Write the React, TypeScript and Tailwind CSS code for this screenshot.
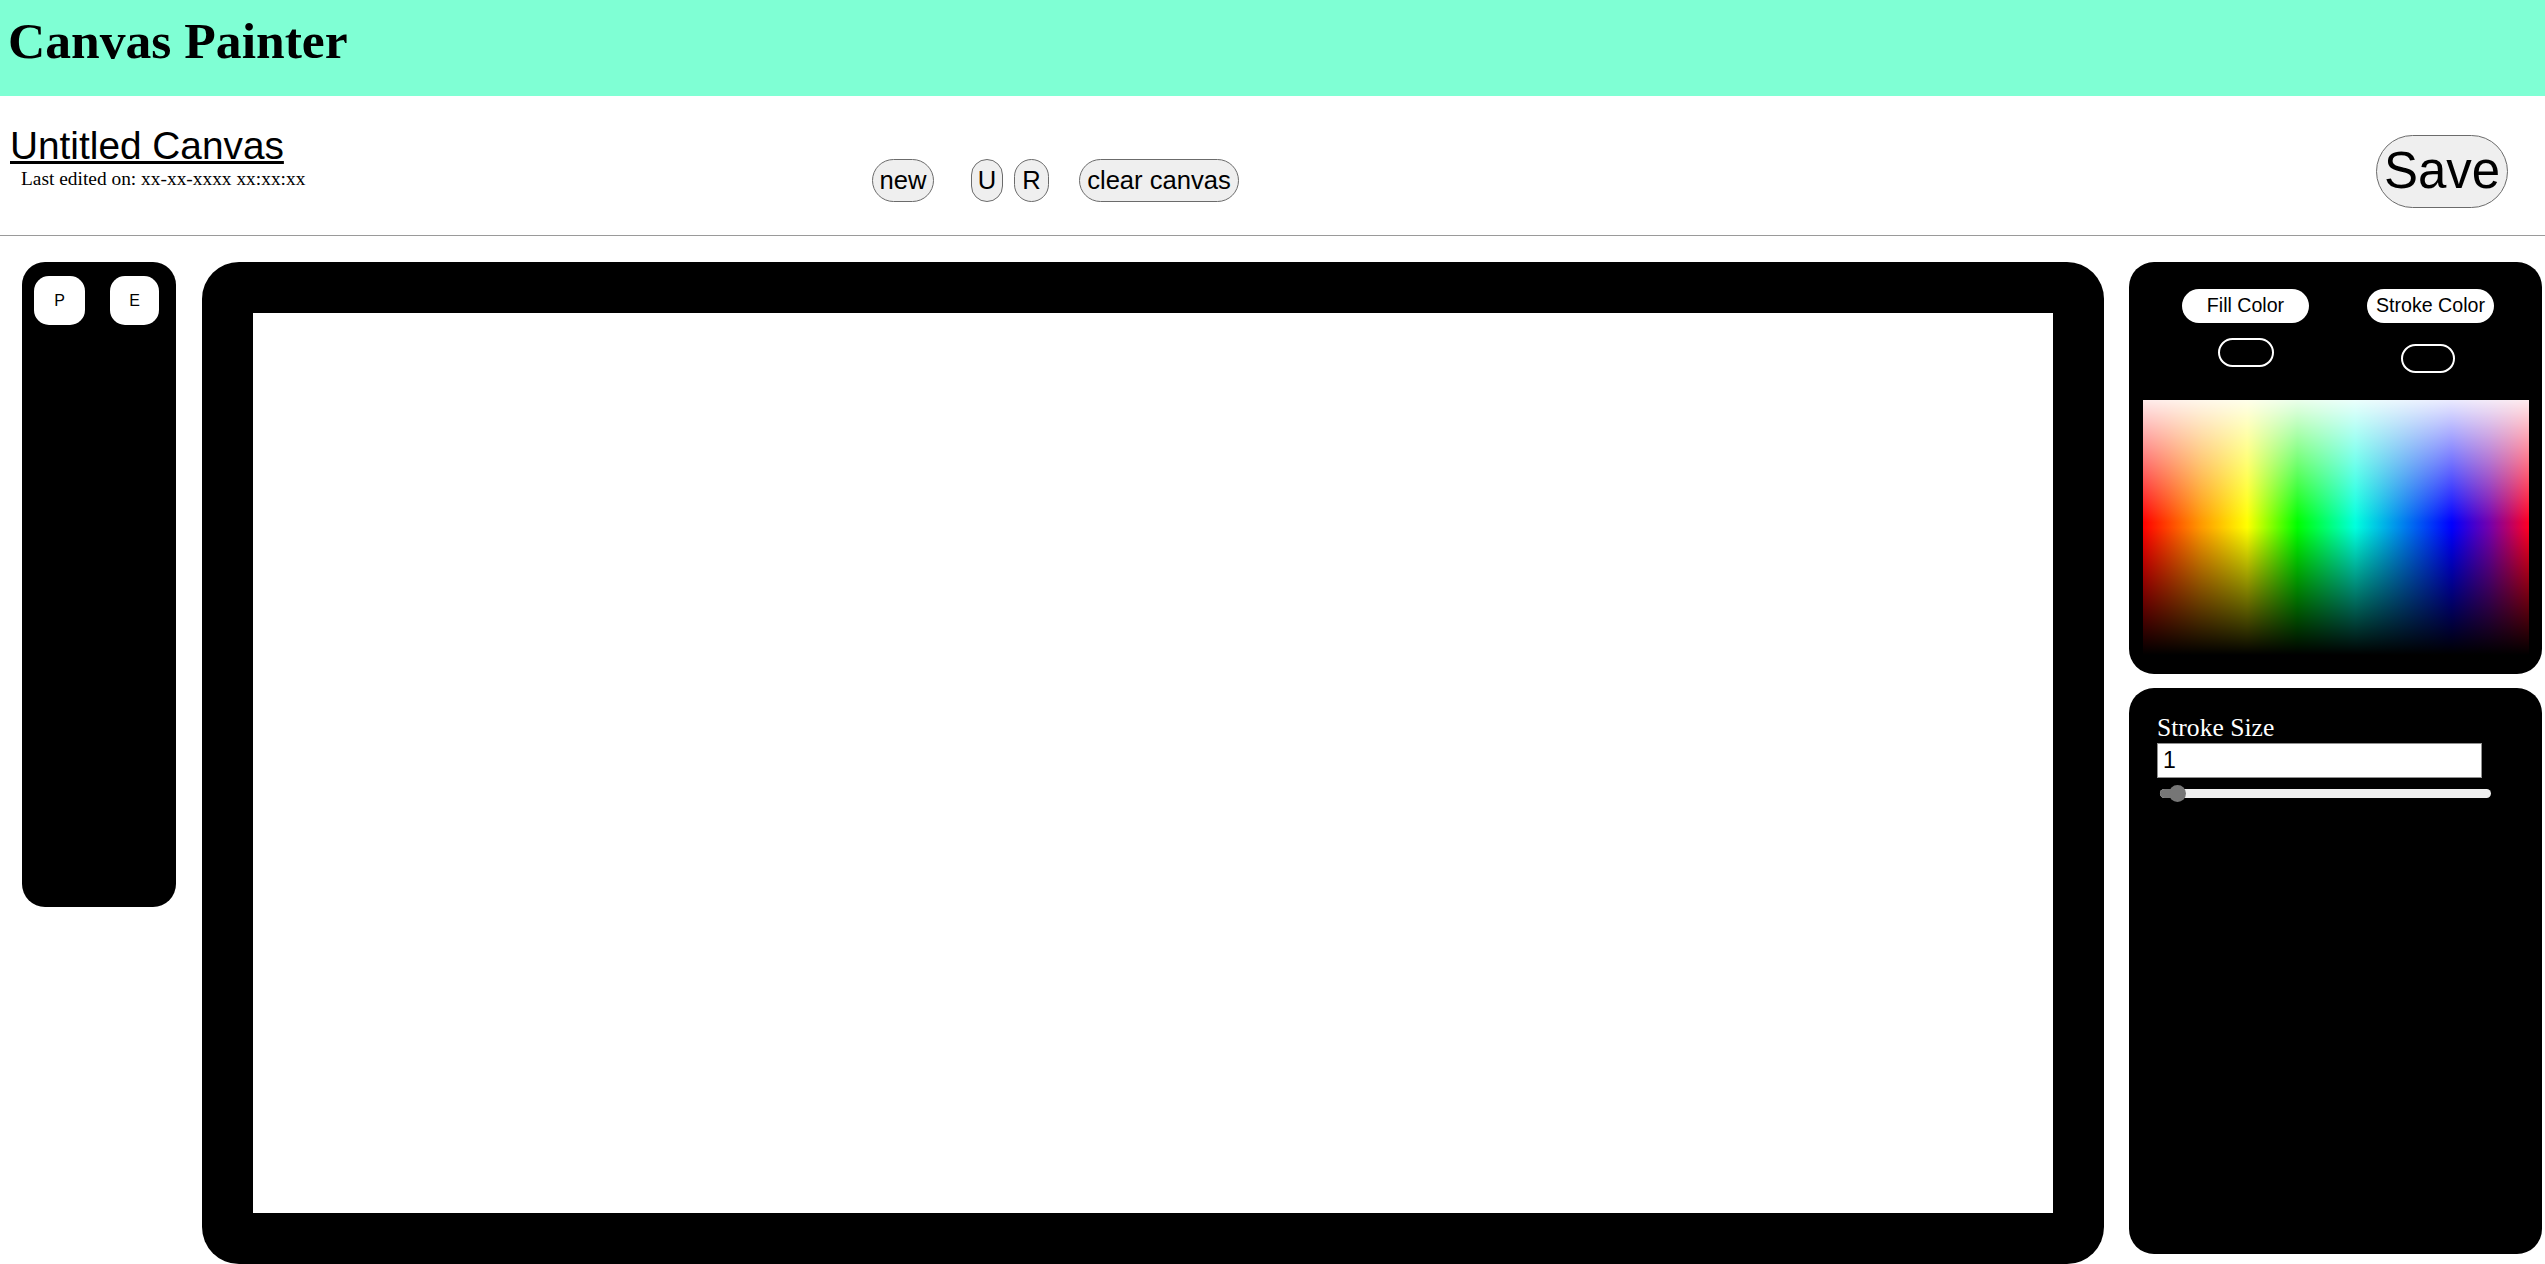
const SANS = "font-['Liberation_Sans',Arial,sans-serif]";
const SERIF = "font-['Liberation_Serif','Times_New_Roman',serif]";

const btn =
  "flex items-center justify-center rounded-full border border-[#6b6b6b] bg-[#efefef] text-black font-['Liberation_Sans',Arial,sans-serif]";

function Toolbar() {
  return (
    <div className="flex h-[139px] items-start">
      <div className="w-[340px] shrink-0 pl-[10px] pt-[28px]">
        <a href="#" className={`${SANS} block text-[38.8px] leading-[43px] text-black underline`}>
          Untitled Canvas
        </a>
        <p className={`${SERIF} mt-[1px] pl-[11px] text-[19.4px] leading-[22px] text-black`}>
          Last edited on: xx-xx-xxxx xx:xx:xx
        </p>
      </div>

      <div className="ml-[532px] mt-[63px] flex items-center">
        <button className={`${btn} h-[43px] w-[62px] text-[25.6px]`}>new</button>
        <button className={`${btn} ml-[37px] h-[43px] w-[32px] text-[25.6px]`}>U</button>
        <button className={`${btn} ml-[11px] h-[43px] w-[35px] text-[25.6px]`}>R</button>
        <button className={`${btn} ml-[30px] h-[43px] w-[160px] text-[25.6px]`}>clear canvas</button>
      </div>

      <button className={`${btn} ml-auto mr-[37px] mt-[39px] h-[73px] w-[132px] text-[51px]`}>
        Save
      </button>
    </div>
  );
}

function ToolPanel() {
  return (
    <div className="flex h-[645px] w-[154px] shrink-0 items-start gap-[25px] rounded-[23px] bg-black pl-[12px] pt-[14px]">
      <button className={`h-[49px] w-[51px] rounded-[15px] bg-white text-[16px] text-black ${SANS}`}>P</button>
      <button className={`h-[49px] w-[49px] rounded-[15px] bg-white text-[16px] text-black ${SANS}`}>E</button>
    </div>
  );
}

function ColorPanel() {
  return (
    <div className="h-[412px] w-[413px] rounded-[25px] bg-black pt-[27px]">
      <div className="flex pl-[53px]">
        <div className="flex w-[127px] flex-col items-center">
          <button className={`h-[34px] w-[127px] rounded-full bg-white text-[19.6px] text-black ${SANS}`}>
            Fill Color
          </button>
          <div className="mt-[15px] h-[29px] w-[56px] rounded-full border-2 border-white bg-black" />
        </div>
        <div className="ml-[58px] flex w-[127px] flex-col items-center">
          <button className={`h-[34px] w-[127px] rounded-full bg-white text-[19.6px] text-black ${SANS}`}>
            Stroke Color
          </button>
          <div className="ml-[-6px] mt-[21px] h-[29px] w-[54px] rounded-full border-2 border-white bg-black" />
        </div>
      </div>

      <div className="ml-[14px] mt-[27px] h-[255px] w-[386px] bg-[linear-gradient(to_right,#ff0000_0%,#ff9900_15%,#ffff00_27%,#00ff00_40%,#00ffdd_55%,#0000ff_80%,#7700aa_90%,#ff0022_100%)]">
        <div className="h-full w-full bg-[linear-gradient(to_bottom,rgba(255,255,255,0.92)_0%,rgba(255,255,255,0)_48%,rgba(0,0,0,0)_50%,rgba(0,0,0,1)_100%)]" />
      </div>
    </div>
  );
}

function StrokePanel() {
  return (
    <div className="h-[566px] w-[413px] rounded-[25px] bg-black pl-[28px] pt-[25px]">
      <label className={`${SERIF} block text-[25.6px] leading-[29px] text-white`}>Stroke Size</label>
      <input
        readOnly
        value="1"
        className={`${SANS} mt-[1px] block h-[35px] w-[325px] border border-[#8f8f8f] bg-white px-[5px] text-[23px] text-black outline-none`}
      />
      <div className="relative mt-[11px] ml-[3px] h-[9px] w-[331px] rounded-full bg-[#efefef]">
        <div className="h-[9px] w-[18px] rounded-l-full bg-[#767676]" />
        <div className="absolute left-[9px] top-[-4px] h-[17px] w-[17px] rounded-full bg-[#767676]" />
      </div>
    </div>
  );
}

export default function App() {
  return (
    <div className="min-h-screen w-[2545px] overflow-hidden bg-white">
      <header className="h-[96px] bg-[#7fffd4] pl-[8px] pt-[12px]">
        <h1 className={`${SERIF} text-[51.6px] font-bold leading-[58px] text-black`}>Canvas Painter</h1>
      </header>

      <Toolbar />
      <div className="h-0 border-t border-[#9a9a9a]" />

      <main className="flex items-start pl-[22px] pt-[26px]">
        <ToolPanel />

        <div className="ml-[26px] shrink-0 rounded-[37px] bg-black p-[51px]">
          <div className="h-[900px] w-[1800px] bg-white" />
        </div>

        <div className="ml-[25px] flex shrink-0 flex-col gap-[14px]">
          <ColorPanel />
          <StrokePanel />
        </div>
      </main>
    </div>
  );
}
